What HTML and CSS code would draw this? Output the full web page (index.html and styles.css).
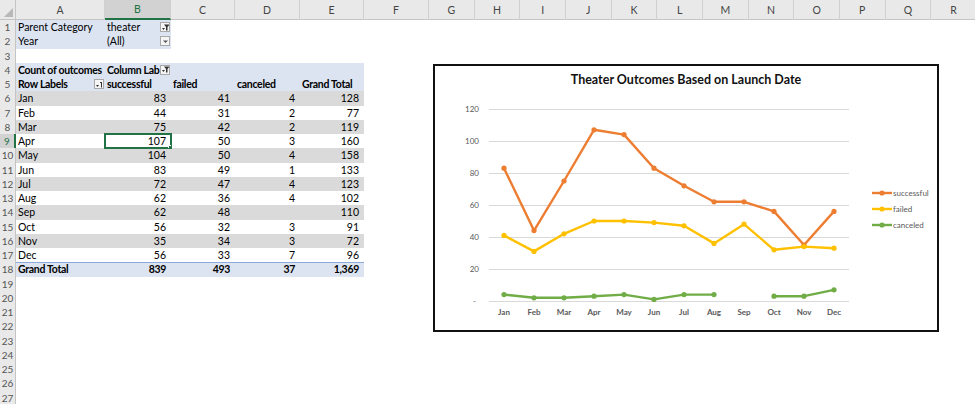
FILE: index.html
```html
<!DOCTYPE html>
<html lang="en">
<head>
    <meta charset="UTF-8">
    <title>Theater Outcomes</title>
    <link rel="stylesheet" href="styles.css">
</head>
<body>
<div class="sheet">
    <!-- column headers -->
    <div class="col-heads">
        <div class="corner"><svg width="16" height="20"><polygon points="13,8 13,17 4,17" fill="#b8b8b8"/></svg></div>
        <div class="ch">A</div>
        <div class="ch sel">B</div>
        <div class="ch">C</div>
        <div class="ch">D</div>
        <div class="ch">E</div>
        <div class="ch">F</div>
        <div class="ch">G</div>
        <div class="ch">H</div>
        <div class="ch">I</div>
        <div class="ch">J</div>
        <div class="ch">K</div>
        <div class="ch">L</div>
        <div class="ch">M</div>
        <div class="ch">N</div>
        <div class="ch">O</div>
        <div class="ch">P</div>
        <div class="ch">Q</div>
        <div class="ch">R</div>
    </div>

    <div class="row">
        <div class="rn">1</div>
        <div class="data">
            <div class="c blue">Parent Category</div>
            <div class="c blue split">theater
                <span class="fbtn"><svg width="9" height="9"><polygon points="1,5 4,5 2.5,7" fill="#333"/><polygon points="3,1.5 8.5,1.5 6.5,4 6.5,7.5 5,7.5 5,4" fill="#333"/></svg></span>
            </div>
        </div>
    </div>
    <div class="row">
        <div class="rn">2</div>
        <div class="data">
            <div class="c blue">Year</div>
            <div class="c blue split">(All)
                <span class="fbtn"><svg width="9" height="9"><polygon points="2,3.5 7,3.5 4.5,6" fill="#555"/></svg></span>
            </div>
        </div>
    </div>
    <div class="row">
        <div class="rn">3</div>
    </div>
    <div class="row">
        <div class="rn">4</div>
        <div class="data blue">
            <div class="c b">Count of outcomes</div>
            <div class="c b split">Column Lab
                <span class="fbtn"><svg width="9" height="9"><polygon points="1,5 4,5 2.5,7" fill="#333"/><polygon points="3,1.5 8.5,1.5 6.5,4 6.5,7.5 5,7.5 5,4" fill="#333"/></svg></span>
            </div>
            <div class="c"></div>
            <div class="c"></div>
            <div class="c"></div>
        </div>
    </div>
    <div class="row">
        <div class="rn">5</div>
        <div class="data blue">
            <div class="c b split">Row Labels
                <span class="fbtn"><svg width="9" height="9"><polygon points="1,5 4,5 2.5,7" fill="#333"/><rect x="6" y="2" width="1" height="5.5" fill="#333"/><rect x="5" y="2" width="1" height="1" fill="#333"/></svg></span>
            </div>
            <div class="c b">successful</div>
            <div class="c b">failed</div>
            <div class="c b">canceled</div>
            <div class="c b">Grand Total</div>
        </div>
    </div>

    <div class="row">
        <div class="rn">6</div>
        <div class="data band"><div class="c">Jan</div><div class="c num">83</div><div class="c num">41</div><div class="c num">4</div><div class="c num">128</div></div>
    </div>
    <div class="row">
        <div class="rn">7</div>
        <div class="data"><div class="c">Feb</div><div class="c num">44</div><div class="c num">31</div><div class="c num">2</div><div class="c num">77</div></div>
    </div>
    <div class="row">
        <div class="rn">8</div>
        <div class="data band"><div class="c">Mar</div><div class="c num">75</div><div class="c num">42</div><div class="c num">2</div><div class="c num">119</div></div>
    </div>
    <div class="row">
        <div class="rn active-rn">9</div>
        <div class="data"><div class="c">Apr</div><div class="c num active">107</div><div class="c num">50</div><div class="c num">3</div><div class="c num">160</div></div>
    </div>
    <div class="row">
        <div class="rn">10</div>
        <div class="data band"><div class="c">May</div><div class="c num">104</div><div class="c num">50</div><div class="c num">4</div><div class="c num">158</div></div>
    </div>
    <div class="row">
        <div class="rn">11</div>
        <div class="data"><div class="c">Jun</div><div class="c num">83</div><div class="c num">49</div><div class="c num">1</div><div class="c num">133</div></div>
    </div>
    <div class="row">
        <div class="rn">12</div>
        <div class="data band"><div class="c">Jul</div><div class="c num">72</div><div class="c num">47</div><div class="c num">4</div><div class="c num">123</div></div>
    </div>
    <div class="row">
        <div class="rn">13</div>
        <div class="data"><div class="c">Aug</div><div class="c num">62</div><div class="c num">36</div><div class="c num">4</div><div class="c num">102</div></div>
    </div>
    <div class="row">
        <div class="rn">14</div>
        <div class="data band"><div class="c">Sep</div><div class="c num">62</div><div class="c num">48</div><div class="c num"></div><div class="c num">110</div></div>
    </div>
    <div class="row">
        <div class="rn">15</div>
        <div class="data"><div class="c">Oct</div><div class="c num">56</div><div class="c num">32</div><div class="c num">3</div><div class="c num">91</div></div>
    </div>
    <div class="row">
        <div class="rn">16</div>
        <div class="data band"><div class="c">Nov</div><div class="c num">35</div><div class="c num">34</div><div class="c num">3</div><div class="c num">72</div></div>
    </div>
    <div class="row">
        <div class="rn">17</div>
        <div class="data"><div class="c">Dec</div><div class="c num">56</div><div class="c num">33</div><div class="c num">7</div><div class="c num">96</div></div>
    </div>
    <div class="row">
        <div class="rn">18</div>
        <div class="data blue total"><div class="c b">Grand Total</div><div class="c num b">839</div><div class="c num b">493</div><div class="c num b">37</div><div class="c num b">1,369</div></div>
    </div>
    <div class="row"><div class="rn">19</div></div>
    <div class="row"><div class="rn">20</div></div>
    <div class="row"><div class="rn">21</div></div>
    <div class="row"><div class="rn">22</div></div>
    <div class="row"><div class="rn">23</div></div>
    <div class="row"><div class="rn">24</div></div>
    <div class="row"><div class="rn">25</div></div>
    <div class="row"><div class="rn">26</div></div>
    <div class="row"><div class="rn">27</div></div>

    <!-- chart floats over the cells -->
    <div class="chart">
        <svg width="502" height="264" viewBox="435 66 502 264">
            <text class="title" x="686" y="84">Theater Outcomes Based on Launch Date</text>

            <g class="grid">
                <line x1="489" y1="109.5" x2="849" y2="109.5"/>
                <line x1="489" y1="141.5" x2="849" y2="141.5"/>
                <line x1="489" y1="173.5" x2="849" y2="173.5"/>
                <line x1="489" y1="205.5" x2="849" y2="205.5"/>
                <line x1="489" y1="237.5" x2="849" y2="237.5"/>
                <line x1="489" y1="269.5" x2="849" y2="269.5"/>
                <line x1="489" y1="301.5" x2="849" y2="301.5"/>
            </g>

            <g class="ylab">
                <text x="479" y="112">120</text>
                <text x="479" y="144">100</text>
                <text x="479" y="176">80</text>
                <text x="479" y="208">60</text>
                <text x="479" y="240">40</text>
                <text x="479" y="272">20</text>
                <text x="476" y="304">-</text>
            </g>

            <g class="xlab">
                <text x="504" y="315">Jan</text>
                <text x="534" y="315">Feb</text>
                <text x="564" y="315">Mar</text>
                <text x="594" y="315">Apr</text>
                <text x="624" y="315">May</text>
                <text x="654" y="315">Jun</text>
                <text x="684" y="315">Jul</text>
                <text x="714" y="315">Aug</text>
                <text x="744" y="315">Sep</text>
                <text x="774" y="315">Oct</text>
                <text x="804" y="315">Nov</text>
                <text x="834" y="315">Dec</text>
            </g>

            <!-- successful -->
            <g class="s-ok">
                <polyline points="504,168.2 534,230.6 564,181 594,129.8 624,134.6 654,168.2 684,185.8 714,201.8 744,201.8 774,211.4 804,245 834,211.4"/>
                <circle cx="504" cy="168.2" r="2.6"/><circle cx="534" cy="230.6" r="2.6"/><circle cx="564" cy="181" r="2.6"/>
                <circle cx="594" cy="129.8" r="2.6"/><circle cx="624" cy="134.6" r="2.6"/><circle cx="654" cy="168.2" r="2.6"/>
                <circle cx="684" cy="185.8" r="2.6"/><circle cx="714" cy="201.8" r="2.6"/><circle cx="744" cy="201.8" r="2.6"/>
                <circle cx="774" cy="211.4" r="2.6"/><circle cx="804" cy="245" r="2.6"/><circle cx="834" cy="211.4" r="2.6"/>
            </g>

            <!-- failed -->
            <g class="s-fail">
                <polyline points="504,235.4 534,251.4 564,233.8 594,221 624,221 654,222.6 684,225.8 714,243.4 744,224.2 774,249.8 804,246.6 834,248.2"/>
                <circle cx="504" cy="235.4" r="2.6"/><circle cx="534" cy="251.4" r="2.6"/><circle cx="564" cy="233.8" r="2.6"/>
                <circle cx="594" cy="221" r="2.6"/><circle cx="624" cy="221" r="2.6"/><circle cx="654" cy="222.6" r="2.6"/>
                <circle cx="684" cy="225.8" r="2.6"/><circle cx="714" cy="243.4" r="2.6"/><circle cx="744" cy="224.2" r="2.6"/>
                <circle cx="774" cy="249.8" r="2.6"/><circle cx="804" cy="246.6" r="2.6"/><circle cx="834" cy="248.2" r="2.6"/>
            </g>

            <!-- canceled (no value for Sep) -->
            <g class="s-cancel">
                <polyline points="504,294.6 534,297.8 564,297.8 594,296.2 624,294.6 654,299.4 684,294.6 714,294.6"/>
                <polyline points="774,296.2 804,296.2 834,289.8"/>
                <circle cx="504" cy="294.6" r="2.6"/><circle cx="534" cy="297.8" r="2.6"/><circle cx="564" cy="297.8" r="2.6"/>
                <circle cx="594" cy="296.2" r="2.6"/><circle cx="624" cy="294.6" r="2.6"/><circle cx="654" cy="299.4" r="2.6"/>
                <circle cx="684" cy="294.6" r="2.6"/><circle cx="714" cy="294.6" r="2.6"/>
                <circle cx="774" cy="296.2" r="2.6"/><circle cx="804" cy="296.2" r="2.6"/><circle cx="834" cy="289.8" r="2.6"/>
            </g>

            <!-- legend -->
            <g class="s-ok"><line x1="872" y1="193" x2="892" y2="193"/><circle cx="882" cy="193" r="2.6"/></g>
            <g class="s-fail"><line x1="872" y1="209" x2="892" y2="209"/><circle cx="882" cy="209" r="2.6"/></g>
            <g class="s-cancel"><line x1="872" y1="225" x2="892" y2="225"/><circle cx="882" cy="225" r="2.6"/></g>
            <g class="legend">
                <text x="893" y="196">successful</text>
                <text x="893" y="212">failed</text>
                <text x="893" y="228">canceled</text>
            </g>
        </svg>
    </div>
</div>
</body>
</html>
```

FILE: styles.css
```css
body {
    margin: 0;
    font-family: Lato, "Liberation Sans", sans-serif;
    font-size: 10.5px;
    color: #000;
    background: #fff;
    overflow: hidden;
}
.sheet {
    position: relative;
    width: 975px;
    height: 404px;
    overflow: hidden;
}

/* column headers */
.col-heads {
    display: grid;
    grid-template-columns: 16px 89px 66px 64px 65px 64px 65px repeat(12, 45.67px);
    height: 20px;
    background: #e9e9e9;
    border-bottom: 1px solid #c4c4c4;
    box-sizing: border-box;
}
.corner {
    border-right: 1px solid #c4c4c4;
    box-sizing: border-box;
}
.corner svg {
    display: block;
}
.ch {
    text-align: center;
    line-height: 20px;
    color: #444;
    border-right: 1px solid #d0d0d0;
    box-sizing: border-box;
}
.ch.sel {
    background: #d2d2d2;
    color: #217346;
    border-bottom: 2px solid #217346;
    line-height: 18px;
}

/* rows */
.row {
    display: flex;
    height: 14.25px;
    line-height: 14.25px;
}
.rn {
    width: 16px;
    flex-shrink: 0;
    background: #e9e9e9;
    color: #555;
    font-size: 10px;
    text-align: center;
    border-right: 1px solid #c4c4c4;
    box-sizing: border-box;
}
.rn.active-rn {
    background: #d2d2d2;
    color: #217346;
    border-right: 2px solid #217346;
}
.data {
    display: grid;
    grid-template-columns: 89px 66px 64px 65px 64px;
}
.c {
    padding: 0 2px;
    white-space: nowrap;
    overflow: hidden;
    box-sizing: border-box;
}
.num {
    text-align: right;
    padding-right: 5px;
}
.b {
    font-weight: bold;
    letter-spacing: -0.3px;
}
.blue {
    background: #dce4f2;
}
.band {
    background: #dadada;
}
.total {
    box-shadow: inset 0 1px 0 #8eaadb;
}
.split {
    display: flex;
    align-items: center;
    justify-content: space-between;
    padding-right: 1px;
}
.fbtn {
    width: 10px;
    height: 10px;
    flex-shrink: 0;
    border: 1px solid #a9a9a9;
    background: #f5f5f5;
    box-sizing: border-box;
    display: flex;
    align-items: center;
    justify-content: center;
}
.fbtn svg {
    display: block;
}
.active {
    position: relative;
    outline: 2px solid #217346;
    outline-offset: -1px;
}
.active::after {
    content: "";
    position: absolute;
    right: -3px;
    bottom: -3px;
    width: 4px;
    height: 4px;
    background: #217346;
    border: 1px solid #fff;
}

/* chart */
.chart {
    position: absolute;
    left: 433px;
    top: 64px;
    width: 506px;
    height: 268px;
    border: 2px solid #111;
    box-sizing: border-box;
    background: #fff;
}
.chart svg {
    display: block;
    font-family: Lato, "Liberation Sans", sans-serif;
}
.title {
    font-size: 12.5px;
    font-weight: bold;
    text-anchor: middle;
    fill: #111;
}
.grid line {
    stroke: #d9d9d9;
    stroke-width: 1;
}
.ylab text {
    font-size: 8px;
    fill: #595959;
    text-anchor: end;
}
.xlab text {
    font-size: 8px;
    font-weight: bold;
    fill: #595959;
    text-anchor: middle;
}
.legend text {
    font-size: 8px;
    fill: #595959;
}
.s-ok polyline, .s-ok line {
    fill: none;
    stroke: #ed7d31;
    stroke-width: 2.4;
    stroke-linejoin: round;
}
.s-ok circle {
    fill: #ed7d31;
}
.s-fail polyline, .s-fail line {
    fill: none;
    stroke: #ffc000;
    stroke-width: 2.4;
    stroke-linejoin: round;
}
.s-fail circle {
    fill: #ffc000;
}
.s-cancel polyline, .s-cancel line {
    fill: none;
    stroke: #70ad47;
    stroke-width: 2.4;
    stroke-linejoin: round;
}
.s-cancel circle {
    fill: #70ad47;
}
```
